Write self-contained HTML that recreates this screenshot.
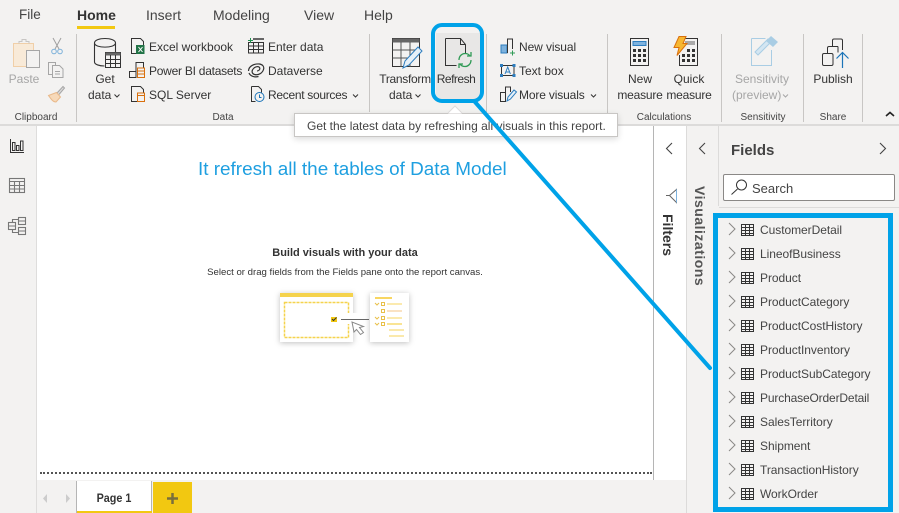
<!DOCTYPE html>
<html><head><meta charset="utf-8"><style>
html,body{margin:0;padding:0;background:#f3f2f1}
#r{position:relative;width:899px;height:513px;overflow:hidden;background:#f3f2f1;font-family:"Liberation Sans",sans-serif;color:#333}
.t{position:absolute;white-space:nowrap;font-size:12px;line-height:14px;color:#333}
.c{transform:translateX(-50%);text-align:center}
.g{color:#444;font-size:10px}
.m{font-size:14px;color:#444}
.s{position:absolute;width:1px;background:#c8c6c4}
svg{position:absolute;left:0;top:0}
.f{position:absolute;left:760px;font-size:12px;line-height:14px;color:#444;white-space:nowrap;letter-spacing:-.05px}
</style></head><body><div id="r">

<div class="t m" style="left:19px;top:8px;font-size:13.500px">File</div>
<div class="t m" style="left:77px;top:8px;font-weight:bold;color:#333">Home</div>
<div style="position:absolute;left:77px;top:26px;width:38px;height:3px;background:#f2c811"></div>
<div class="t m" style="left:146px;top:8px">Insert</div>
<div class="t m" style="left:213px;top:8px">Modeling</div>
<div class="t m" style="left:304px;top:8px">View</div>
<div class="t m" style="left:364px;top:8px">Help</div>

<div class="s" style="left:76px;top:34px;height:88px"></div>
<div class="s" style="left:369px;top:34px;height:78px"></div>
<div class="s" style="left:486px;top:34px;height:78px"></div>
<div class="s" style="left:607px;top:34px;height:88px"></div>
<div class="s" style="left:721px;top:34px;height:88px"></div>
<div class="s" style="left:803px;top:34px;height:88px"></div>
<div class="s" style="left:862px;top:34px;height:88px"></div>

<div style="position:absolute;left:436px;top:33px;width:44px;height:67px;background:#e8e7e6"></div>

<div class="t c" style="left:24px;top:72px;color:#a6a6a6">Paste</div>
<div class="t c" style="left:105px;top:72px">Get</div>
<div class="t" style="left:88px;top:88px">data</div>
<div class="t" style="left:149px;top:40px">Excel workbook</div>
<div class="t" style="left:149px;top:64px;letter-spacing:-.25px">Power BI datasets</div>
<div class="t" style="left:149px;top:88px">SQL Server</div>
<div class="t" style="left:268px;top:40px">Enter data</div>
<div class="t" style="left:268px;top:64px">Dataverse</div>
<div class="t" style="left:268px;top:88px;letter-spacing:-.3px">Recent sources</div>
<div class="t c" style="left:405px;top:72px;letter-spacing:-.3px">Transform</div>
<div class="t" style="left:389px;top:88px">data</div>
<div class="t c" style="left:456px;top:72px;letter-spacing:-.5px">Refresh</div>
<div class="t" style="left:519px;top:40px;letter-spacing:-.1px">New visual</div>
<div class="t" style="left:519px;top:64px">Text box</div>
<div class="t" style="left:519px;top:88px;letter-spacing:-.15px">More visuals</div>
<div class="t c" style="left:640px;top:72px">New</div>
<div class="t c" style="left:640px;top:88px;letter-spacing:-.2px">measure</div>
<div class="t c" style="left:689px;top:72px">Quick</div>
<div class="t c" style="left:689px;top:88px;letter-spacing:-.2px">measure</div>
<div class="t c" style="left:762px;top:72px;color:#a6a6a6">Sensitivity</div>
<div class="t" style="left:732px;top:88px;color:#a6a6a6">(preview)</div>
<div class="t c" style="left:833px;top:72px">Publish</div>

<div class="t g c" style="left:36px;top:111px">Clipboard</div>
<div class="t g c" style="left:223px;top:111px">Data</div>
<div class="t g c" style="left:664px;top:111px">Calculations</div>
<div class="t g c" style="left:763px;top:111px">Sensitivity</div>
<div class="t g c" style="left:833px;top:111px">Share</div>

<div style="position:absolute;left:0;top:124px;width:899px;height:2px;background:#dcdbda"></div>
<div style="position:absolute;left:37px;top:126px;width:616px;height:357px;background:#fff"></div>
<div style="position:absolute;left:36px;top:126px;width:1px;height:387px;background:#dedddc"></div>
<div style="position:absolute;left:653px;top:126px;width:33px;height:354px;background:#fff;border-left:1px solid #b5b5b5;box-sizing:border-box"></div>
<div style="position:absolute;left:686px;top:126px;width:1px;height:387px;background:#dcdbda"></div>
<div style="position:absolute;left:718px;top:126px;width:1px;height:80px;background:#dcdbda"></div>
<div style="position:absolute;left:40px;top:472px;width:612px;border-top:2px dotted #555"></div>
<div style="position:absolute;left:37px;top:480px;width:649px;height:33px;background:#f3f2f1"></div>

<div class="t" style="left:198px;top:159px;font-size:18.900px;line-height:21px;color:#1e9fe0">It refresh all the tables of Data Model</div>
<div class="t c" style="left:345px;top:246px;font-weight:bold;color:#333;font-size:11px">Build visuals with your data</div>
<div class="t c" style="left:345px;top:266px;font-size:9.600px;color:#333">Select or drag fields from the Fields pane onto the report canvas.</div>

<div style="position:absolute;left:76px;top:481px;width:76px;height:32px;background:#fff;border-left:1px solid #b5b5b5;border-right:1px solid #b5b5b5;box-sizing:border-box"></div>
<div style="position:absolute;left:77px;top:511px;width:75px;height:2px;background:#f2c811"></div>
<div class="t c" style="left:114px;top:491px;font-weight:bold;font-size:12px;transform:translateX(-50%) scaleX(.9)">Page 1</div>
<div style="position:absolute;left:153px;top:482px;width:39px;height:31px;background:#f2c811"></div>

<div style="position:absolute;left:294px;top:113px;width:324px;height:24px;background:#fff;border:1px solid #c8c6c4;box-sizing:border-box;box-shadow:0 2px 6px rgba(0,0,0,.15)"></div>
<div class="t" style="left:307px;top:119px;color:#444">Get the latest data by refreshing all visuals in this report.</div>

<div class="t" style="left:731px;top:142px;font-size:15px;line-height:18px;font-weight:bold;color:#444">Fields</div>
<div style="position:absolute;left:723px;top:174px;width:172px;height:27px;background:#fff;border:1px solid #8a8886;border-radius:2px;box-sizing:border-box"></div>
<div class="t" style="left:752px;top:182px;font-size:13px;color:#444">Search</div>
<div style="position:absolute;left:719px;top:207px;width:180px;height:1px;background:#dcdbda"></div>

<div class="t" style="left:661px;top:214px;transform-origin:0 0;transform:translateX(14px) rotate(90deg);font-weight:bold;font-size:14px;line-height:14px;color:#333">Filters</div>
<div class="t" style="left:692px;top:186px;transform-origin:0 0;transform:translateX(15px) rotate(90deg);font-size:14px;line-height:14px;font-weight:bold;letter-spacing:.5px;color:#555">Visualizations</div>

<div class="f" style="top:223px">CustomerDetail</div>
<div class="f" style="top:247px">LineofBusiness</div>
<div class="f" style="top:271px">Product</div>
<div class="f" style="top:295px">ProductCategory</div>
<div class="f" style="top:319px">ProductCostHistory</div>
<div class="f" style="top:343px">ProductInventory</div>
<div class="f" style="top:367px">ProductSubCategory</div>
<div class="f" style="top:391px;letter-spacing:-.15px">PurchaseOrderDetail</div>
<div class="f" style="top:415px">SalesTerritory</div>
<div class="f" style="top:439px">Shipment</div>
<div class="f" style="top:463px">TransactionHistory</div>
<div class="f" style="top:487px">WorkOrder</div>

<svg width="899" height="513" viewBox="0 0 899 513" fill="none">
<defs>
<g id="tb" stroke="#333" stroke-width="1"><rect x=".5" y=".5" width="12" height="11"/><path d="M.5 3.500h12M.5 6.500h12M.5 9.500h12M4.500 .5v11M8.500 .5v11"/></g>
<path id="ch" d="M0 0l6 6-6 6" stroke="#8a8886" stroke-width="1"/>
</defs>

<!-- tooltip arrow -->
<path d="M448 113.500l7-7 7 7z" fill="#fff"/><path d="M448 113l7-7 7 7" stroke="#dcdbda"/>

<!-- paste -->
<path d="M13.500 43.500h20v23h-20z" fill="#f8ead8" stroke="#f0cfa8"/><path d="M19 43.500v-2h3v-2h4v2h3v2" stroke="#c8c6c4"/>
<rect x="26.500" y="50.500" width="13" height="17" fill="#f3f2f1" stroke="#a6a6a6"/>
<!-- cut -->
<path d="M53 38l6 11M61 38l-6 11" stroke="#a0a0a0"/><circle cx="54" cy="51.500" r="2.300" stroke="#7eb2da"/><circle cx="60" cy="51.500" r="2.300" stroke="#7eb2da"/>
<!-- copy -->
<path d="M52.500 74.500h-4v-12h7v3" stroke="#a6a6a6"/><path d="M52.500 65.500h7l3.500 3.500v8.500h-10.500z" stroke="#a6a6a6"/><path d="M55 71.500h5M55 74h5" stroke="#a6a6a6"/>
<!-- brush -->
<path d="M57 93l6-6.500 1.500 1.500-5.500 6.500" fill="#dcdbda" stroke="#a6a6a6"/>
<path d="M48.500 95.500l8-3 4 4.500-4.500 5c-3 0-5-3-7.500-6.500z" fill="#f7d9b9" stroke="#e9b98a"/>

<!-- get data -->
<path d="M94.500 43v19c0 2.500 5 4 10 4M94.500 43c0-6 21-6 21 0v9M94.500 43c0 5.500 21 5.500 21 0" stroke="#333" stroke-width="1.100"/>
<rect x="105.500" y="52.500" width="15" height="15" fill="#f3f2f1" stroke="#333"/><rect x="105.500" y="52.500" width="15" height="3" fill="#666"/><path d="M105.500 59.500h15M105.500 63.500h15M110.500 55v12M115.500 55v12" stroke="#333"/>
<path d="M114.500 94.500l2.500 2.500 2.500-2.500" stroke="#333"/>

<!-- excel etc. -->
<path d="M131.500 38.500h9l3 3v12h-12z" stroke="#333"/><rect x="136" y="45" width="8.500" height="9" fill="#217346"/><path d="M138.500 47l4 5M142.500 47l-4 5" stroke="#fff"/>
<path d="M129.500 71.500h6.500v6h-6.500zM136 71v-8.500h7.500v5" stroke="#333"/><rect x="137.500" y="68" width="7" height="9.500" fill="#f3f2f1" stroke="#d9700d"/><path d="M137.500 71h7M137.500 74h7" stroke="#d9700d"/>
<path d="M131.500 86.500h9l3 3v12h-12z" stroke="#333"/><rect x="137.500" y="93" width="7" height="8.500" fill="#f3f2f1" stroke="#d9700d"/><path d="M137.500 95.500h7" stroke="#d9700d"/>
<!-- enter data -->
<rect x="248.500" y="42.500" width="15" height="10.500" stroke="#333"/><path d="M248.500 46h15M248.500 49.500h15M253.500 42v11M258.500 42v11" stroke="#333"/><path d="M253 39h11" stroke="#666" stroke-width="2"/><path d="M248 40.500h5M250.500 38v5" stroke="#1f8f4e"/>
<!-- dataverse -->
<path d="M248.500 71c0-5 6-7.500 11-7 3 .5 5 2.500 4 5.500-1 3.500-5 6-9 5-3-1-3-4-1-6 2-2 5-2.500 6-1 1 1.500-.5 3.500-2.500 3.500" stroke="#333" stroke-width="1.200"/><path d="M249 73c1.500 3.500 6 4.500 9.500 3.500" stroke="#333" stroke-width="1.200"/>
<!-- recent -->
<path d="M251.500 86.500h7l3 3v3M251.500 86.500v15h4" stroke="#333"/><circle cx="259.500" cy="97" r="4.500" stroke="#1b74b8"/><path d="M259.500 94.500v3h2" stroke="#1b74b8"/>
<path d="M353 94.500l2.500 2.500 2.500-2.500" stroke="#333"/>

<!-- transform -->
<rect x="392.500" y="38.500" width="27" height="28" stroke="#333"/><rect x="392.500" y="38.500" width="27" height="4" fill="#666"/><path d="M392.500 50h27M392.500 58h19M401 42v25M410 42v25" stroke="#555"/>
<path d="M403 68l2-7 13-14 4 4-13 14z" fill="#e6f0f8" stroke="#2e7ebf"/>
<path d="M415.500 94.500l2.500 2.500 2.500-2.500" stroke="#333"/>

<!-- refresh -->
<path d="M445.500 38.500h15l5 6v9M445.500 38.500v27h11M460.500 38.500v6h5" stroke="#333"/>
<path d="M459 60c0-4 3-6.500 6-6.500 2 0 4 1 5 2.500M471 60c0 4-3 6.500-6 6.500-2 0-4-1-5-2.500M471 52v4h-4M459 68v-4h4" stroke="#2f9a55" stroke-width="1.300"/>

<!-- visuals -->
<rect x="501" y="45" width="6" height="8" fill="#7db2de" stroke="#2e7ebf"/><path d="M507.500 53V39h5v10" stroke="#333"/><path d="M510 53h5M512.500 50.500v5" stroke="#2f9a55"/>
<rect x="501.500" y="65.500" width="12.500" height="10" stroke="#333"/><path d="M505 74l2.700-7 2.700 7M506 72h3.500" stroke="#2e7ebf"/><g fill="#2e7ebf"><rect x="500" y="64" width="3" height="3"/><rect x="512.500" y="64" width="3" height="3"/><rect x="500" y="74" width="3" height="3"/><rect x="512.500" y="74" width="3" height="3"/></g>
<path d="M500.500 92.500h5v9h-5zM505.500 92.500v-5.500h5v5" stroke="#333"/><path d="M507 101l1-4 6-7 2.500 2-6 7z" fill="#e6f0f8" stroke="#2e7ebf"/>
<path d="M591 94.500l2.500 2.500 2.500-2.500" stroke="#333"/>

<!-- new measure -->
<rect x="630.500" y="38.500" width="18" height="27" stroke="#333"/><rect x="633" y="41.500" width="13" height="4" fill="#7db2de" stroke="#2e7ebf"/>
<g fill="#333"><rect x="633" y="49" width="3" height="3"/><rect x="638" y="49" width="3" height="3"/><rect x="643" y="49" width="3" height="3"/><rect x="633" y="54" width="3" height="3"/><rect x="638" y="54" width="3" height="3"/><rect x="643" y="54" width="3" height="3"/><rect x="633" y="59" width="3" height="3"/><rect x="638" y="59" width="3" height="3"/><rect x="643" y="59" width="3" height="3"/></g>
<!-- quick measure -->
<path d="M680 38.500h17.500v27h-18V55" stroke="#333"/><rect x="685" y="41" width="10" height="4" fill="#aaa"/>
<g fill="#333"><rect x="682" y="54" width="3" height="3"/><rect x="687" y="54" width="3" height="3"/><rect x="692" y="54" width="3" height="3"/><rect x="682" y="59" width="3" height="3"/><rect x="687" y="59" width="3" height="3"/><rect x="692" y="59" width="3" height="3"/><rect x="687" y="49" width="3" height="3"/><rect x="692" y="49" width="3" height="3"/></g>
<path d="M679 36.500h7l-3 7h4l-10 12 2-8h-5z" fill="#f7b731" stroke="#d9700d"/>

<!-- sensitivity -->
<path d="M751.500 38.500h14M751.500 38.500v27h20V50" stroke="#a9cde4"/><path d="M755 52l13-13 3 3-13 13z" fill="#d4e6f2" stroke="#a9cde4"/><path d="M766 41l5-5 7 6-5 5z" fill="#a9cde4"/>
<path d="M783 94.500l2.500 2.500 2.500-2.500" stroke="#a6a6a6"/>

<!-- publish -->
<rect x="822.500" y="53.500" width="10.500" height="12" rx="1.500" stroke="#333"/><path d="M827.500 53v-5a1.500 1.500 0 0 1 1.500-1.500h9M832.500 46.500v-6a1.500 1.500 0 0 1 1.500-1.500h7a1.500 1.500 0 0 1 1.500 1.500V50" stroke="#333"/><path d="M838 46.500v6" stroke="#333"/>
<path d="M842.500 68V53M836.500 58.500l6-6 6 6" stroke="#1b74b8" stroke-width="1.200"/>
<path d="M886 116l4-3.500 4 3.500" stroke="#222" stroke-width="1.600"/>

<!-- left nav -->
<path d="M10.500 139v13.500h13.500" stroke="#333"/><path d="M12.500 142.500h2.500v8h-2.500zM16.500 145.500h2.500v5h-2.500zM20.500 141h2.500v9.500h-2.500z" stroke="#333"/>
<g stroke="#777" stroke-width="1.100"><rect x="9.500" y="178.500" width="15" height="14"/><path d="M9.500 181.500h15M9.500 185.500h15M9.500 189h15M14.500 181v12M19.500 181v12"/></g>
<g stroke="#777" stroke-width="1.100"><rect x="8.500" y="222.500" width="7" height="7"/><rect x="18.500" y="217.500" width="7" height="7"/><rect x="18.500" y="227.500" width="7" height="7"/><path d="M8.500 226h7M18.500 221h7M18.500 231h7M12.500 222v-2.500h6M12.500 230v2.500h6"/></g>

<!-- chevrons -->
<path d="M672 143l-5.500 5.500 5.500 5.500M705 143l-5.500 5.500 5.500 5.500" stroke="#444" stroke-width="1.100"/>
<path d="M880 143l5.500 5.500-5.500 5.500" stroke="#444" stroke-width="1.100"/>
<!-- filter -->
<path d="M666 195.500h3.500l7-6v13l-7-7" stroke="#666"/><path d="M676.500 189.500v13" stroke="#7db2de"/>
<!-- search -->
<circle cx="741.500" cy="185" r="5" stroke="#333"/><path d="M737.500 189l-6 5.500" stroke="#333"/>

<!-- fields -->
<use href="#ch" x="729" y="223"/><use href="#tb" x="741" y="224"/>
<use href="#ch" x="729" y="247"/><use href="#tb" x="741" y="248"/>
<use href="#ch" x="729" y="271"/><use href="#tb" x="741" y="272"/>
<use href="#ch" x="729" y="295"/><use href="#tb" x="741" y="296"/>
<use href="#ch" x="729" y="319"/><use href="#tb" x="741" y="320"/>
<use href="#ch" x="729" y="343"/><use href="#tb" x="741" y="344"/>
<use href="#ch" x="729" y="367"/><use href="#tb" x="741" y="368"/>
<use href="#ch" x="729" y="391"/><use href="#tb" x="741" y="392"/>
<use href="#ch" x="729" y="415"/><use href="#tb" x="741" y="416"/>
<use href="#ch" x="729" y="439"/><use href="#tb" x="741" y="440"/>
<use href="#ch" x="729" y="463"/><use href="#tb" x="741" y="464"/>
<use href="#ch" x="729" y="487"/><use href="#tb" x="741" y="488"/>

<!-- page bar -->
<path d="M47 494l-4 4.500 4 4.500z" fill="#ccc"/><path d="M66 494l4 4.500-4 4.500z" fill="#ccc"/>
<path d="M172.500 493v11M167 498.500h11" stroke="#7a6f3c" stroke-width="2.500"/>

<!-- illustration -->
<rect x="280" y="293" width="73" height="49" fill="#fff" style="filter:drop-shadow(0 1px 3px rgba(0,0,0,.25))"/>
<rect x="280" y="293" width="73" height="4" fill="#f5d34d"/>
<rect x="284.500" y="302.500" width="64" height="35" stroke="#f5d34d" stroke-width="1.500" stroke-dasharray="3 1"/>
<rect x="328" y="313" width="47" height="11" fill="#fff"/>
<rect x="331" y="317" width="6" height="5" fill="#f2c811"/><path d="M332 319l1.500 1.500 3-3" stroke="#333"/>
<rect x="370" y="293" width="39" height="49" fill="#fff" style="filter:drop-shadow(0 1px 3px rgba(0,0,0,.25))"/>
<path d="M341 319.500h28" stroke="#666"/>
<path d="M352 322l2 10 2.500-2.500 4 5 3-2-4-5 4-1z" fill="#fff" stroke="#888"/>
<path d="M375 298h17" stroke="#f5c92e" stroke-width="1.600"/>
<g stroke-width="1.200"><path d="M387 304h15" stroke="#f8dc7a"/><path d="M387 311h15" stroke="#f7cf9b"/><path d="M387 318h15" stroke="#f8dc7a"/><path d="M387 324h15" stroke="#f5d34d"/><path d="M389 330h15M389 336h15" stroke="#f8dc7a"/></g>
<g stroke="#e8c04a"><rect x="381.500" y="302.500" width="3" height="3"/><rect x="381.500" y="309.500" width="3" height="3"/><rect x="381.500" y="316.500" width="3" height="3"/><rect x="381.500" y="322.500" width="3" height="3"/><path d="M375 303l2 2 2-2M375 317l2 2 2-2M375 323l2 2 2-2"/></g>

<!-- annotations -->
<rect x="433" y="25" width="49" height="76" rx="9" stroke="#00a2e8" stroke-width="4"/>
<path d="M475 102L710 368" stroke="#00a2e8" stroke-width="4" stroke-linecap="round"/>
<rect x="715.500" y="215.500" width="175" height="294" stroke="#00a2e8" stroke-width="5"/>
</svg>
</div></body></html>
